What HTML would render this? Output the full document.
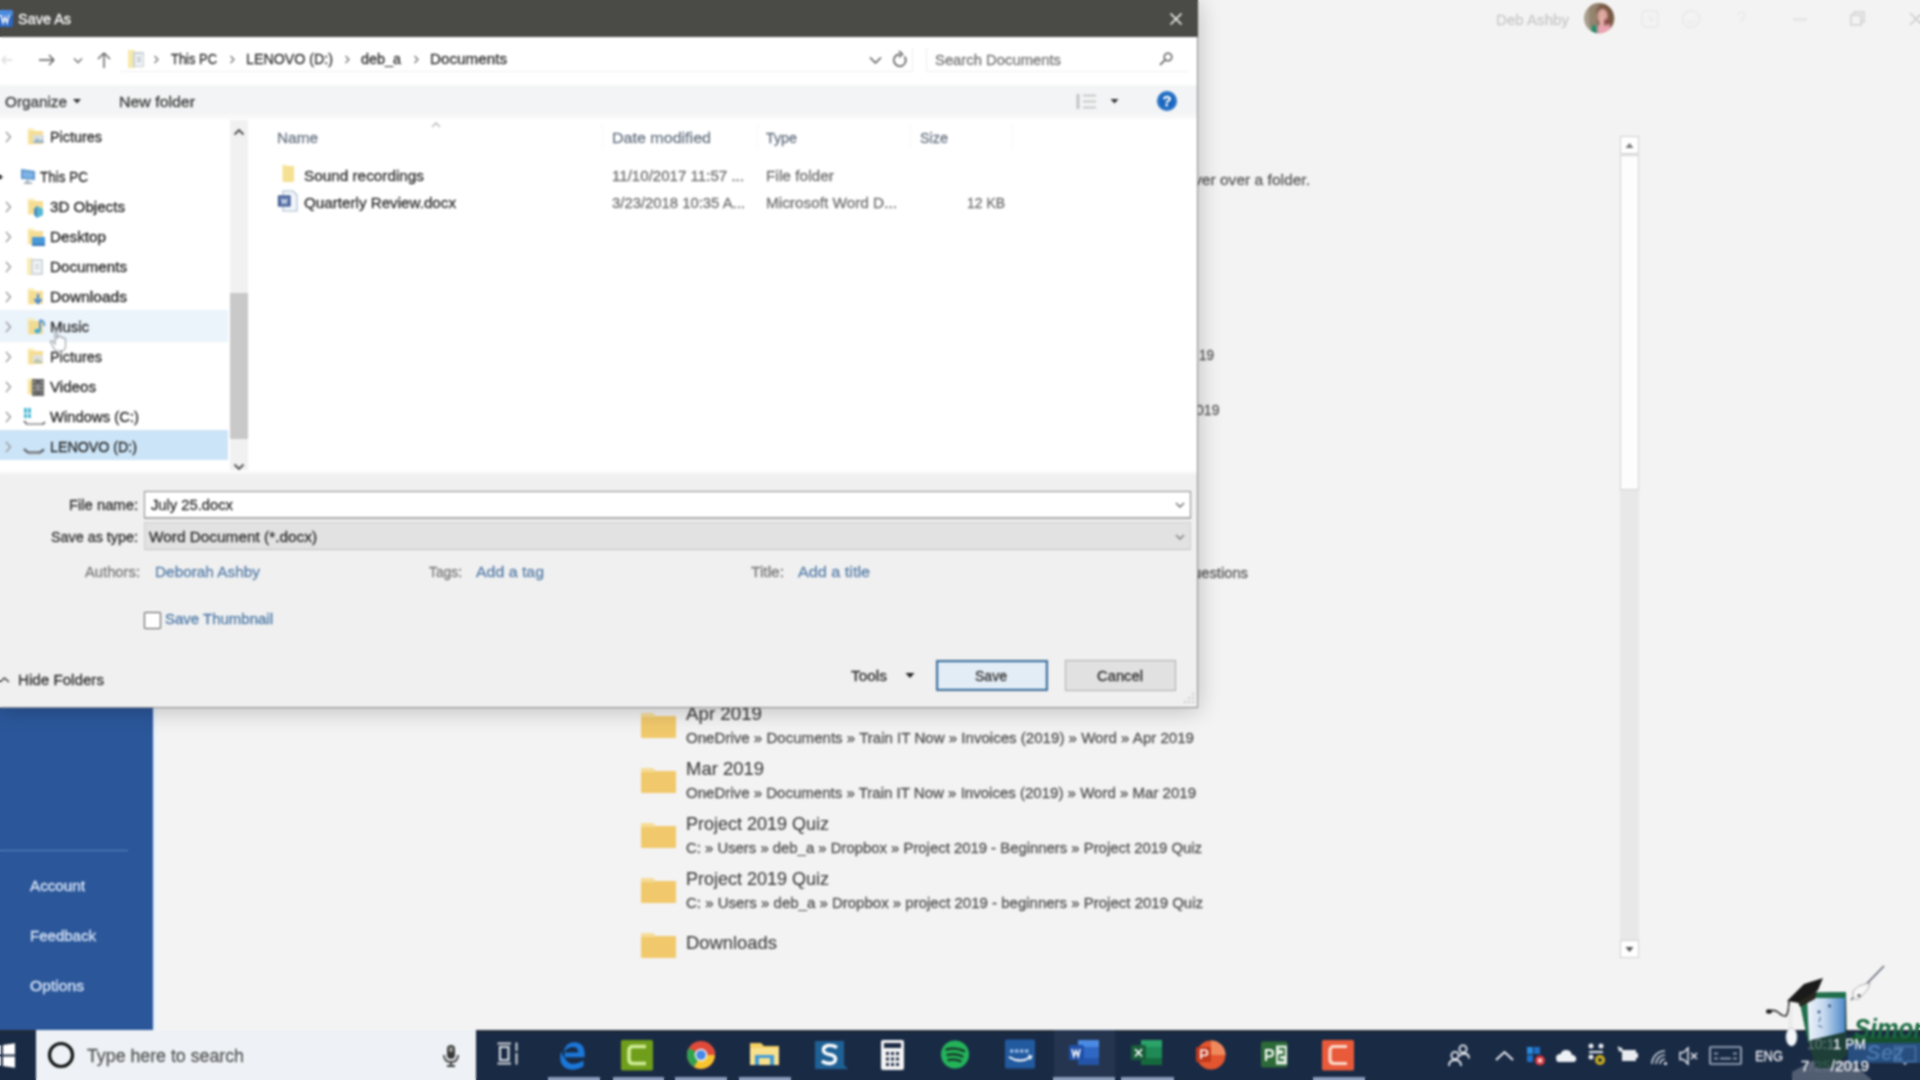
<!DOCTYPE html>
<html lang="en">
<head>
<meta charset="utf-8">
<title>Save As</title>
<style>
*{box-sizing:border-box;margin:0;padding:0}
html,body{width:1920px;height:1080px;overflow:hidden;background:#f3f3f3;font-family:"Liberation Sans",sans-serif;color:#222}
.abs{position:absolute}
svg{position:absolute;overflow:visible}
.t{position:absolute;white-space:nowrap;line-height:20px;height:20px;font-size:15px;color:#2e2e2e;transform-origin:0 50%;-webkit-text-stroke:.3px currentColor}
#stage{position:absolute;left:0;top:0;width:1920px;height:1080px;overflow:hidden;background:#f3f3f3}
/* Word backstage */
#wordside{left:0;top:700px;width:153px;height:330px;background:#2b579a}
#wordside .t{color:#dbe7f8}
.bgtxt{color:#5a5a5a}
.fold{position:absolute;width:35px;height:22px;background:#f1c96c;border-radius:1px}
.fold:before{content:"";position:absolute;left:0;top:-3px;width:14px;height:4px;background:#f5dc98;border-radius:1px 3px 0 0}
.ft{font-size:18px;color:#3f3f3f;-webkit-text-stroke:.15px currentColor}
.fp{font-size:15px;color:#505050}
/* dialog */
#dlg{left:0;top:0;width:1198px;height:708px;background:#fff;box-shadow:0 2px 22px 0 rgba(0,0,0,.24);border-right:1px solid #8c8c8c;border-bottom:1px solid #8c8c8c}
#titlebar{left:0;top:0;width:1198px;height:37px;background:#4a4a46}
#toolbar{left:0;top:85px;width:1197px;height:34px;background:linear-gradient(#f3f4f5,#f3f4f5 80%,#fbfbfb)}
#bottompane{left:0;top:474px;width:1197px;height:233px;background:#f0f0f0}
.nav{color:#1f1f1f}
.hdr{color:#687483}
.gray{color:#707070}
.lnk{color:#5b80aa}
.btn{position:absolute;border:1px solid #adadad;background:#e1e1e1}
/* taskbar */
#taskbar{left:0;top:1030px;width:1920px;height:50px;background:#192a44;border-top:2px solid #222a38}
#search{left:36px;top:1030px;width:440px;height:50px;background:#eef2f6}
.ind{position:absolute;top:1077px;height:3px;background:#8c9fbd}
</style>
</head>
<body>
<svg width="0" height="0" style="position:absolute"><defs><filter id="gb" x="0" y="0" width="100%" height="100%" color-interpolation-filters="sRGB"><feGaussianBlur stdDeviation="1" result="b"/><feMerge><feMergeNode in="SourceGraphic"/><feMergeNode in="b"/></feMerge></filter></defs></svg>
<div id="stage" style="filter:url(#gb)">

<!-- ===== Word background ===== -->
<div id="bgword" class="abs" style="left:0;top:0;width:1920px;height:1030px">
  <div class="t" style="left:1496px;top:10px;color:#c9c9c9;transform:scaleX(1.0062)">Deb Ashby</div>
  <!-- avatar -->
  <svg style="left:1583px;top:2px" width="32" height="33" viewBox="0 0 32 33">
    <defs><clipPath id="avc"><circle cx="16.200" cy="16.300" r="15.200"/></clipPath><filter id="avb"><feGaussianBlur stdDeviation="1.1"/></filter></defs>
    <g clip-path="url(#avc)"><g filter="url(#avb)">
      <rect x="-4" y="-4" width="40" height="41" fill="#8c7763"/>
      <rect x="-4" y="-4" width="12" height="41" fill="#aaa090"/>
      <rect x="6" y="2" width="9" height="22" fill="#94846f"/>
      <path d="M13 8q4-7 11-5 6 3 6 12l-1 12-5 2-9-3z" fill="#76543f"/>
      <ellipse cx="19.500" cy="14" rx="5" ry="7" fill="#dfa9a0"/>
      <ellipse cx="23" cy="20" rx="2.500" ry="3" fill="#8a4444"/>
      <path d="M17 17l3-1 1 8-4 1z" fill="#efb8b0"/>
      <rect x="8" y="23" width="6.500" height="12" fill="#1c8a6b"/>
      <path d="M14.500 23l6 1 6-2 4 12h-16z" fill="#eaa3b1"/>
    </g></g>
  </svg>
  <!-- faint header icons -->
  <svg style="left:1640px;top:8px" width="280" height="24" viewBox="0 0 280 24" fill="none" stroke="#e8e8e8" stroke-width="1.6">
    <rect x="2" y="3" width="16" height="16" rx="3"/><path d="M10 7v5h4"/>
    <circle cx="51" cy="11" r="8.5"/><path d="M47 13q4 4 8 0"/>
    <path d="M98 8q0-4 3.500-4t3.500 3.500q0 2-3.500 4v3" stroke="#e9e9e9"/>
    <path d="M153 11.500h14" stroke="#dcdcdc"/>
    <path d="M211 7h10v10h-10zM214 7v-3h10v10h-3" stroke="#d2d2d2"/>
    <path d="M270 5l12 12M282 5l-12 12" stroke="#cfcfcf"/>
  </svg>

  <div class="t bgtxt" style="left:1194px;top:170px;transform:scaleX(1.0382)">ver over a folder.</div>
  <div class="t bgtxt" style="left:1199px;top:345px;transform:scaleX(0.8989)">19</div>
  <div class="t bgtxt" style="left:1196px;top:400px;transform:scaleX(0.9388)">019</div>
  <div class="t bgtxt" style="left:1193px;top:563px;transform:scaleX(0.9843)">uestions</div>

  <div class="fold" style="left:641px;top:716px"></div>
  <div class="t ft" style="left:686px;top:704px;transform:scaleX(1.0402)">Apr 2019</div>
  <div class="t fp" style="left:686px;top:728px;transform:scaleX(1.0049)">OneDrive » Documents » Train IT Now » Invoices (2019) » Word » Apr 2019</div>
  <div class="fold" style="left:641px;top:771px"></div>
  <div class="t ft" style="left:686px;top:759px;transform:scaleX(1.0257)">Mar 2019</div>
  <div class="t fp" style="left:686px;top:783px;transform:scaleX(1.0023)">OneDrive » Documents » Train IT Now » Invoices (2019) » Word » Mar 2019</div>
  <div class="fold" style="left:641px;top:826px"></div>
  <div class="t ft" style="left:686px;top:814px;transform:scaleX(0.9995)">Project 2019 Quiz</div>
  <div class="t fp" style="left:686px;top:838px;transform:scaleX(0.9917)">C: » Users » deb_a » Dropbox » Project 2019 - Beginners » Project 2019 Quiz</div>
  <div class="fold" style="left:641px;top:881px"></div>
  <div class="t ft" style="left:686px;top:869px;transform:scaleX(0.9995)">Project 2019 Quiz</div>
  <div class="t fp" style="left:686px;top:893px;transform:scaleX(1.0001)">C: » Users » deb_a » Dropbox » project 2019 - beginners » Project 2019 Quiz</div>
  <div class="fold" style="left:641px;top:936px"></div>
  <div class="t ft" style="left:686px;top:933px;transform:scaleX(1.0218)">Downloads</div>

  <!-- right scrollbar -->
  <div class="abs" style="left:1620px;top:136px;width:19px;height:822px;background:#e8e8e8"></div>
  <div class="abs" style="left:1620px;top:155px;width:19px;height:335px;background:#fdfdfd;border:1px solid #d2d2d2"></div>
  <div class="abs" style="left:1620px;top:136px;width:19px;height:18px;background:#fff;border:1px solid #cfcfcf"></div>
  <div class="abs" style="left:1620px;top:940px;width:19px;height:18px;background:#fff;border:1px solid #cfcfcf"></div>
  <svg style="left:1620px;top:136px" width="19" height="822"><path d="M5.500 12l4-5 4 5z" fill="#777"/><path d="M5.500 811l4 5 4-5z" fill="#555"/></svg>

  <div id="wordside" class="abs">
    <div class="abs" style="left:0;top:150px;width:128px;height:1px;background:#5c80ba"></div>
    <div class="t" style="left:30px;top:176px;transform:scaleX(1.0147)">Account</div>
    <div class="t" style="left:30px;top:226px;transform:scaleX(1.0019)">Feedback</div>
    <div class="t" style="left:30px;top:276px;transform:scaleX(1.0444)">Options</div>
  </div>
  <div class="abs" style="left:153px;top:700px;width:5px;height:330px;background:linear-gradient(90deg,#e4eefa,#f1f4f8)"></div>
</div>
<!-- ===== Save As dialog ===== -->
<div id="dlg" class="abs">
  <div id="titlebar" class="abs">
    <svg style="left:0;top:10px" width="14" height="18" viewBox="0 0 14 18"><rect x="-6" y="0" width="19" height="17" rx="2" fill="#2b66c4"/><rect x="-6" y="0" width="19" height="6" rx="2" fill="#4a8be0"/><path d="M1 5l2 8 2-6 2 6 2-8" stroke="#fff" stroke-width="1.500" fill="none"/></svg>
    <div class="t" style="left:18px;top:9px;color:#fff;transform:scaleX(0.9628)">Save As</div>
    <svg style="left:1169px;top:12px" width="14" height="14" viewBox="0 0 14 14"><path d="M1.500 1.500l11 11M12.500 1.500l-11 11" stroke="#f2f2f2" stroke-width="1.700"/></svg>
  </div>

  <!-- address row -->
  <svg style="left:0;top:44px" width="1197" height="34" viewBox="0 0 1197 34" fill="none">
    <path d="M2 16h10M2 16l4-4M2 16l4 4" stroke="#d9d9d9" stroke-width="1.300"/>
    <path d="M39 16h15M54 16l-5-5M54 16l-5 5" stroke="#5a5a5a" stroke-width="1.400"/>
    <path d="M74 14.500l4 4 4-4" stroke="#6a6a6a" stroke-width="1.300"/>
    <path d="M104 24v-15M104 9l-6 6M104 9l6 6" stroke="#5a5a5a" stroke-width="1.400"/>
    <!-- folder/doc icon -->
    <rect x="128" y="6" width="7" height="18" fill="#f6e9a8"/>
    <rect x="133" y="8" width="11" height="15" fill="#c9d0d6"/>
    <rect x="135" y="10" width="8" height="12" fill="#eef1f3"/>
    <path d="M137 14h4M137 17h4" stroke="#8fa1b3" stroke-width="1"/>
    <!-- separators -->
    <path d="M154.500 12l3.500 3.500-3.500 3.500M230.500 12l3.500 3.500-3.500 3.500M345.500 12l3.500 3.500-3.500 3.500M414.500 12l3.500 3.500-3.500 3.500" stroke="#707070" stroke-width="1.200"/>
    <!-- dropdown + refresh -->
    <path d="M870 13.500l5.500 5.500 5.500-5.500" stroke="#555" stroke-width="1.500"/>
    <path d="M904.500 12.500a6 6 0 1 1-4.500-2.300" stroke="#555" stroke-width="1.600"/><path d="M899 7l3.500 3.200-3.500 3" stroke="#555" stroke-width="1.400"/>
    <!-- box borders (faint) -->
    <path d="M120 27.500h792.500v-24" stroke="#f0f0f0" stroke-width="1"/>
    <path d="M926.500 3.500v24h262" stroke="#efefef" stroke-width="1"/>
    <!-- search icon -->
    <circle cx="1168" cy="13" r="3.800" stroke="#5a5a5a" stroke-width="1.500"/><path d="M1165 16l-5 5" stroke="#5a5a5a" stroke-width="1.700"/>
  </svg>
  <div class="t" style="left:171px;top:49px;transform:scaleX(0.8623)">This PC</div>
  <div class="t" style="left:246px;top:49px;transform:scaleX(0.9489)">LENOVO (D:)</div>
  <div class="t" style="left:361px;top:49px;transform:scaleX(0.9588)">deb_a</div>
  <div class="t" style="left:430px;top:49px;transform:scaleX(1.0148)">Documents</div>
  <div class="t" style="left:935px;top:50px;color:#767676;transform:scaleX(0.9878)">Search Documents</div>

  <!-- toolbar -->
  <div id="toolbar" class="abs"></div>
  <div class="t" style="left:5px;top:92px;color:#3a3a3a;transform:scaleX(1.0185)">Organize</div>
  <div class="t" style="left:119px;top:92px;color:#3a3a3a;transform:scaleX(1.0599)">New folder</div>
  <svg style="left:0;top:85px" width="1197" height="34" viewBox="0 0 1197 34">
    <path d="M73 14h8l-4 4.500z" fill="#333"/>
    <path d="M1078 9v15" stroke="#c4c4c4" stroke-width="3"/>
    <path d="M1083 10.500h13M1083 16.500h13M1083 22.500h13" stroke="#c8c8c8" stroke-width="1.800"/>
    <path d="M1110.500 14h8l-4 4.500z" fill="#333"/>
    <circle cx="1167" cy="16" r="10" fill="#1a66bd"/>
    <circle cx="1167" cy="16" r="8.300" fill="none" stroke="#3f8ade" stroke-width="1"/>
  </svg>
  <div class="t" style="left:1162.500px;top:91px;color:#fff;font-size:15px;font-weight:bold">?</div>
  <!-- nav pane -->
  <div class="abs" style="left:0;top:310px;width:228px;height:32px;background:#ebf3fb"></div>
  <div class="abs" style="left:0;top:430px;width:228px;height:30px;background:#cce4f7"></div>
  <svg style="left:0;top:120px" width="250" height="354" viewBox="0 0 250 354" fill="none">
    <defs>
      <filter id="sb" x="-10%" y="-10%" width="120%" height="120%"><feGaussianBlur stdDeviation=".45"/></filter>
      <g id="cv"><path d="M0 0l4.500 5-4.500 5" stroke="#9a9a9a" stroke-width="1.400" fill="none"/></g>
      <g id="fd"><rect x="0.500" y="0.500" width="7" height="16" fill="#f8eaa6"/><rect x="2" y="3" width="14" height="13" fill="#f3d579"/></g>
    </defs>
    <use href="#cv" x="6" y="12"/><use href="#cv" x="6" y="82"/><use href="#cv" x="6" y="112"/><use href="#cv" x="6" y="142"/><use href="#cv" x="6" y="172"/>
    <use href="#cv" x="6" y="202"/><use href="#cv" x="6" y="232"/><use href="#cv" x="6" y="262"/><use href="#cv" x="6" y="292"/><use href="#cv" x="6" y="322"/>
    <path d="M0 54l3 3-3 3z" fill="#444"/>
    <g opacity=".8" filter="url(#sb)">
    <!-- Pictures (top) -->
    <use href="#fd" x="27" y="8"/><rect x="33" y="15" width="11" height="8" fill="#cfd8dc"/><path d="M33 23l4-5 3 3 2-2 2 4z" fill="#7aa0b8"/>
    <!-- This PC -->
    <path d="M21 49l14 2v9l-14-1z" fill="#3b7fc4"/><path d="M23 51.500l10 1.500v5l-10-.500z" fill="#5fa3e0"/><path d="M24 63h8M27.500 60v3" stroke="#6b7f92" stroke-width="1.500"/>
    <!-- 3D Objects -->
    <use href="#fd" x="27" y="78"/><path d="M37 86l6 3v6l-6 3z" fill="#2aa6c8"/><path d="M37 86l-3 3v6l3 3z" fill="#1d6fb0"/>
    <!-- Desktop -->
    <use href="#fd" x="27" y="108"/><rect x="32" y="117" width="13" height="9" fill="#1f7fd0"/><rect x="32" y="124" width="13" height="2" fill="#0d5aa6"/>
    <!-- Documents -->
    <rect x="27" y="138" width="6" height="17" fill="#f8eaa6"/><rect x="31" y="139" width="12" height="16" fill="#c6ccd2"/><rect x="33" y="141" width="8" height="12" fill="#f1f3f5"/><path d="M35 145h4M35 148h4" stroke="#93a3b3"/>
    <!-- Downloads -->
    <use href="#fd" x="27" y="168"/><path d="M38 174v7M34.500 179l3.500 4 3.500-4" stroke="#1e6fd0" stroke-width="2.200"/>
    <!-- Music -->
    <use href="#fd" x="27" y="198"/><path d="M40 200v11" stroke="#1b73c8" stroke-width="1.800"/><ellipse cx="37.500" cy="211" rx="3" ry="2.300" fill="#1b9ed0"/><path d="M40 200q5 1 4 6" stroke="#1b73c8" stroke-width="1.600"/>
    <!-- Pictures -->
    <use href="#fd" x="27" y="228"/><rect x="33" y="235" width="10" height="8" fill="#d9dcd6"/><path d="M33 243l4-5 3 3 1-1 2 3z" fill="#a6b3a0"/>
    <!-- Videos -->
    <use href="#fd" x="27" y="258"/><rect x="32" y="259" width="12" height="17" fill="#3a3a3a"/><path d="M34 261v13M42 261v13" stroke="#c9c9c9" stroke-width="1.200" stroke-dasharray="2 2"/><rect x="36" y="264" width="4" height="7" fill="#777"/>
    <!-- Windows (C:) -->
    <path d="M24 288h3v5h-3zM28 288h3v5h-3zM24 294h3v4h-3zM28 294h3v4h-3z" fill="#22a9c9"/><path d="M24 301l3 3h16l2-2" stroke="#5c5c5c" stroke-width="2"/><path d="M27 303.500h15" stroke="#bdbdbd" stroke-width="1.500"/>
    <!-- LENOVO (D:) -->
    <path d="M24 329l4 3.500h12l4-3" stroke="#3d3d3d" stroke-width="2.200"/><path d="M28 334h13" stroke="#b5b5b5" stroke-width="1.300"/>
    </g>
    <!-- nav scrollbar -->
    <rect x="230" y="0" width="18" height="354" fill="#f1f1f1"/>
    <rect x="230" y="173" width="18" height="146" fill="#c9c9c9"/>
    <path d="M234.500 14.500l4.500-4.500 4.500 4.500" stroke="#4d4d4d" stroke-width="1.800"/>
    <path d="M234.500 344.500l4.500 4.500 4.500-4.500" stroke="#4d4d4d" stroke-width="1.800"/>
  </svg>
  <div class="t nav" style="left:50px;top:127px;transform:scaleX(0.9596)">Pictures</div>
  <div class="t nav" style="left:40px;top:167px;transform:scaleX(0.8998)">This PC</div>
  <div class="t nav" style="left:50px;top:197px;transform:scaleX(1.0107)">3D Objects</div>
  <div class="t nav" style="left:50px;top:227px;transform:scaleX(1.0176)">Desktop</div>
  <div class="t nav" style="left:50px;top:257px;transform:scaleX(1.0148)">Documents</div>
  <div class="t nav" style="left:50px;top:287px;transform:scaleX(1.0375)">Downloads</div>
  <div class="t nav" style="left:50px;top:317px;transform:scaleX(0.9956)">Music</div>
  <div class="t nav" style="left:50px;top:347px;transform:scaleX(0.9596)">Pictures</div>
  <div class="t nav" style="left:50px;top:377px;transform:scaleX(1.0089)">Videos</div>
  <div class="t nav" style="left:50px;top:407px;transform:scaleX(0.9887)">Windows (C:)</div>
  <div class="t nav" style="left:50px;top:437px;transform:scaleX(0.9489)">LENOVO (D:)</div>
  <!-- hand cursor -->
  <svg style="left:50px;top:328px" width="20" height="26" viewBox="0 0 20 26"><path d="M5 1.500q2-.5 2 1.500v8l1-3q2-.5 2.500 1 2-.5 2.500 1 2.500-.5 2.500 2v6q0 4-3 5h-6q-2-1-4-5l-2-4q0-2 2.500-.5l2 2.500z" fill="#fff" stroke="#8a8f96" stroke-width="1.200" opacity=".8"/></svg>

  <!-- file list -->
  <svg style="left:250px;top:120px" width="947" height="100" viewBox="0 0 947 100" fill="none">
    <path d="M182 7l4-4 4 4" stroke="#b5b5b5" stroke-width="1.300"/>
    <path d="M352.500 4v26M507.500 4v26M660.500 4v26M762.500 4v26" stroke="#f9f9f9"/>
    <!-- folder icon -->
    <rect x="32" y="44.500" width="5" height="17.500" fill="#faf1c4"/><rect x="33" y="46" width="11" height="16" fill="#f5e093"/>
    <!-- docx icon -->
    <path d="M33 71h10l4 4v16h-14z" fill="#f1f6fc" stroke="#a9b9cc" stroke-width="1.100"/>
    <rect x="28.500" y="76" width="11.500" height="10" fill="#5571a6" stroke="#3a558c" stroke-width="1.200"/>
    <path d="M31.500 78.500l1.300 5 1.500-4 1.500 4 1.300-5" stroke="#e8eef8" stroke-width="1.100"/>
  </svg>
  <div class="t hdr" style="left:277px;top:128px;transform:scaleX(1.0246)">Name</div>
  <div class="t hdr" style="left:612px;top:128px;transform:scaleX(1.0695)">Date modified</div>
  <div class="t hdr" style="left:766px;top:128px;transform:scaleX(0.9529)">Type</div>
  <div class="t hdr" style="left:920px;top:128px;transform:scaleX(0.9593)">Size</div>
  <div class="t" style="left:304px;top:166px;transform:scaleX(1.0206)">Sound recordings</div>
  <div class="t gray" style="left:612px;top:166px;transform:scaleX(1.0058)">11/10/2017 11:57 ...</div>
  <div class="t gray" style="left:766px;top:166px;transform:scaleX(1.0325)">File folder</div>
  <div class="t" style="left:304px;top:193px;transform:scaleX(1.0129)">Quarterly Review.docx</div>
  <div class="t gray" style="left:612px;top:193px;transform:scaleX(0.9903)">3/23/2018 10:35 A...</div>
  <div class="t gray" style="left:766px;top:193px;transform:scaleX(1.0227)">Microsoft Word D...</div>
  <div class="t gray" style="left:967px;top:193px;transform:scaleX(0.9297)">12 KB</div>

  <!-- bottom pane -->
  <div id="bottompane" class="abs"></div>
  <div class="abs" style="left:0;top:470px;width:1197px;height:6px;background:linear-gradient(#fff,#f0f0f0)"></div>
  <div class="t" style="left:69px;top:495px;transform:scaleX(0.9853)">File name:</div>
  <div class="abs" style="left:144px;top:491px;width:1047px;height:28px;background:#fff;border:1px solid #8a8a8a;border-bottom:2px solid #a9a9a9"></div>
  <div class="t" style="left:151px;top:495px;transform:scaleX(0.9833)">July 25.docx</div>
  <div class="t" style="left:51px;top:527px;transform:scaleX(0.9572)">Save as type:</div>
  <div class="abs" style="left:144px;top:522px;width:1047px;height:28px;background:#e2e2e2;border:1px solid #cdcdcd;border-bottom-color:#c2c2c2"></div>
  <div class="t" style="left:149px;top:527px;transform:scaleX(1.0247)">Word Document (*.docx)</div>
  <svg style="left:1172px;top:495px" width="16" height="50" viewBox="0 0 16 50" fill="none"><path d="M4 8l4 4 4-4" stroke="#666" stroke-width="1.300"/><path d="M4 40l4 4 4-4" stroke="#777" stroke-width="1.300"/></svg>
  <div class="t gray" style="left:85px;top:562px;color:#7a7a7a;transform:scaleX(0.9843)">Authors:</div>
  <div class="t lnk" style="left:155px;top:562px;transform:scaleX(1.0236)">Deborah Ashby</div>
  <div class="t gray" style="left:429px;top:562px;color:#7a7a7a;transform:scaleX(0.9203)">Tags:</div>
  <div class="t lnk" style="left:476px;top:562px;transform:scaleX(1.0589)">Add a tag</div>
  <div class="t gray" style="left:751px;top:562px;color:#7a7a7a;transform:scaleX(1.0328)">Title:</div>
  <div class="t lnk" style="left:798px;top:562px;transform:scaleX(1.0792)">Add a title</div>
  <div class="abs" style="left:144px;top:612px;width:17px;height:17px;background:#fff;border:1.500px solid #555;border-radius:1px"></div>
  <div class="t lnk" style="left:165px;top:609px;color:#4f7aa8;transform:scaleX(0.9988)">Save Thumbnail</div>
  <svg style="left:0;top:674px" width="12" height="12" viewBox="0 0 12 12" fill="none"><path d="M0 8l4.500-4 4.500 4" stroke="#444" stroke-width="1.600"/></svg>
  <div class="t" style="left:18px;top:670px;transform:scaleX(1.0112)">Hide Folders</div>
  <div class="t" style="left:851px;top:666px;transform:scaleX(1.0277)">Tools</div>
  <svg style="left:904px;top:671px" width="12" height="10" viewBox="0 0 12 10"><path d="M1.500 2h9l-4.500 5z" fill="#222"/></svg>
  <div class="btn" style="left:936px;top:660px;width:112px;height:31px;border:2px solid #3f6e99;background:#e3edf6;box-shadow:inset 0 0 0 1px #bcd9f1"></div>
  <div class="t" style="left:975px;top:666px;transform:scaleX(0.9356)">Save</div>
  <div class="btn" style="left:1065px;top:660px;width:111px;height:31px"></div>
  <div class="t" style="left:1097px;top:666px;transform:scaleX(0.9849)">Cancel</div>
  <svg style="left:1184px;top:693px" width="12" height="12" viewBox="0 0 12 12" fill="#c8c8c8"><rect x="8" y="0" width="2" height="2"/><rect x="4" y="4" width="2" height="2"/><rect x="8" y="4" width="2" height="2"/><rect x="0" y="8" width="2" height="2"/><rect x="4" y="8" width="2" height="2"/><rect x="8" y="8" width="2" height="2"/></svg>

</div>

<!-- ===== Taskbar ===== -->
<div id="taskbar" class="abs"></div>
<div class="abs" style="left:1054px;top:1030px;width:61px;height:50px;background:#25354f"></div>
<div id="search" class="abs">
  <svg style="left:11px;top:11px" width="30" height="30" viewBox="0 0 30 30"><circle cx="14" cy="14" r="11.500" fill="none" stroke="#111" stroke-width="3.200"/></svg>
  <div class="t" style="left:51px;top:16px;font-size:18px;color:#555;transform:scaleX(0.9868)">Type here to search</div>
  <svg style="left:406px;top:14px" width="18" height="24" viewBox="0 0 18 24" fill="none"><rect x="5" y="1" width="8" height="14" rx="4" fill="#3a3a3a"/><rect x="7" y="3" width="4" height="5" rx="1.500" fill="#9a9a9a"/><path d="M2 11q0 7 7 7t7-7" stroke="#3a3a3a" stroke-width="1.800"/><path d="M9 18v3M5 22h8" stroke="#3a3a3a" stroke-width="1.800"/></svg>
</div>
<div class="ind" style="left:548px;width:52px"></div>
<div class="ind" style="left:613px;width:51px"></div>
<div class="ind" style="left:675px;width:52px"></div>
<div class="ind" style="left:739px;width:52px"></div>
<div class="ind" style="left:1053px;width:62px"></div>
<div class="ind" style="left:1121px;width:53px"></div>
<div class="ind" style="left:1313px;width:52px"></div>
<svg style="left:0;top:1030px" width="1920" height="50" viewBox="0 0 1920 50" fill="none">
  <!-- start -->
  <path d="M-8 16.500l9-1.300v9.300h-9zM3 15l12-1.700v11.200h-12zM-8 26.500h9v9.300l-9-1.300zM3 26.500h12v11.200l-12-1.700z" fill="#fff"/>
  <!-- task view -->
  <path d="M497.500 13.500h13.500M497.500 33.500h13.500M500 17h8.500v13h-8.500z" stroke="#d5d9e0" stroke-width="2.200"/><path d="M516.500 12.500v22" stroke="#d5d9e0" stroke-width="2"/><path d="M515 22h3" stroke="#192a44" stroke-width="2"/>
  <!-- edge -->
  <g transform="translate(574 26) scale(1.06 1.14) translate(-574 -26)"><path d="M564 27h20q1-13-10-13-8 0-10 9 4-5 9-5 5 0 5 5h-13q-1 9 8 10 5 0 10-3v5q-5 3-11 3-11-1-11-11 0-3 1-5" fill="#1b77d8"/></g>
  <!-- camtasia green -->
  <rect x="621" y="10" width="32" height="30.500" rx="1.500" fill="#6f9e1b"/><path d="M646 16.500h-13q-4 0-4 4v9q0 4 4 4h13" stroke="#cfec96" stroke-width="3.600"/>
  <!-- chrome -->
  <circle cx="701" cy="25" r="14" fill="#e04a3a"/><path d="M701 25l-12.100-7a14 14 0 0 0 5.100 19.100z" fill="#2fa24f"/><path d="M701 25l-7 12.100a14 14 0 0 0 19.100-19.100z" fill="#f6c52e"/><path d="M701 25h14a14 14 0 0 0-1.900-7h-12.100z" fill="#e04a3a"/><circle cx="701" cy="25" r="6.300" fill="#f4f4f4"/><circle cx="701" cy="25" r="4.800" fill="#4688e8"/>
  <!-- explorer -->
  <path d="M750 13h11l3 3h15v19h-29z" fill="#f3cf63"/><rect x="750" y="18" width="29" height="17" fill="#f9e08c"/><rect x="755" y="25" width="19" height="10" fill="#3e9ad8"/><rect x="759" y="28" width="11" height="7" fill="#f9e08c"/>
  <!-- snagit -->
  <path d="M815 11h29v24l4 4h-33z" fill="#1f6195"/><path d="M837 17.500q-4-2.500-9-2-5 1-4.500 5 .5 3 6 4 6 1 6 4.500 0 4-5.500 4.500-5 0-8-2.500" stroke="#fff" stroke-width="3.400"/>
  <!-- calculator -->
  <rect x="881" y="10" width="23" height="30" rx="2" fill="#f4f4f4"/><rect x="884" y="13" width="17" height="5" fill="#1d2b45"/><path d="M886 23.500h3M891 23.500h3M896 23.500h3M886 29h3M891 29h3M896 29h3M886 34.500h3M891 34.500h3M896 34.500h3" stroke="#1d2b45" stroke-width="3"/>
  <!-- spotify -->
  <circle cx="955" cy="24.500" r="14" fill="#23b45a"/><path d="M946.500 19.500q9-2.500 17.500 1.500M947.500 25q8-2 15 1.500M948.500 30q6.500-1.500 12 1.200" stroke="#173a2a" stroke-width="2.500" stroke-linecap="round"/>
  <!-- amazon -->
  <rect x="1005" y="9.500" width="30" height="29" rx="1.500" fill="#225a9f"/><path d="M1009 27q11 7 22 0" stroke="#fff" stroke-width="2"/><path d="M1028 25.500l3.500.8-1.500 3.200" stroke="#fff" stroke-width="1.500"/><path d="M1010 21h20" stroke="#9fc0e6" stroke-width="3" stroke-dasharray="3.500 1.500"/>
  <!-- word -->
  <rect x="1078" y="10" width="21" height="25" rx="1.500" fill="#2f68c4"/><rect x="1078" y="10" width="21" height="7" fill="#4a8ae2"/><rect x="1078" y="28" width="21" height="7" fill="#2454a8"/><rect x="1069" y="15" width="15" height="15" rx="1.500" fill="#1f50a8"/><path d="M1072 19l1.800 7.500 2.200-6 2.200 6 1.800-7.500" stroke="#fff" stroke-width="1.600"/>
  <!-- excel -->
  <rect x="1141" y="10" width="21" height="25" rx="1.500" fill="#1f8a55"/><rect x="1141" y="10" width="21" height="7" fill="#2aa268"/><rect x="1141" y="28" width="21" height="7" fill="#156a3d"/><rect x="1131" y="15" width="15" height="15" rx="1.500" fill="#175c38"/><path d="M1135 19l7 7.500M1142 19l-7 7.500" stroke="#fff" stroke-width="1.800"/>
  <!-- powerpoint -->
  <circle cx="1211" cy="25" r="14.500" fill="#e2552f"/><path d="M1211 10.500a14.500 14.500 0 0 1 14.500 14.500h-14.500z" fill="#f08a5c"/><rect x="1196" y="17" width="15" height="15" rx="1.500" fill="#c2391c"/><path d="M1201 29v-9h3.500q3 0 3 2.700t-3 2.800h-3.500" stroke="#fff" stroke-width="1.700"/>
  <!-- project -->
  <rect x="1261" y="11.500" width="26.500" height="26" rx="2" fill="#2c6a38"/><rect x="1276" y="15.500" width="11" height="19" fill="#e3eee3"/><path d="M1266 31v-11h3.500q3.500 0 3.500 3.200t-3.500 3.300h-3.500" stroke="#fff" stroke-width="2"/><path d="M1279 19h5v6h-5M1279 25v5h5" stroke="#2c6a38" stroke-width="1.800"/>
  <!-- camtasia orange -->
  <rect x="1322" y="10" width="32" height="30.500" rx="1.500" fill="#e85a3a"/><path d="M1347 16.500h-13q-4 0-4 4v9q0 4 4 4h13" stroke="#fbd9cc" stroke-width="3.200"/>
  <!-- people -->
  <circle cx="1463" cy="19" r="3.600" stroke="#e8ebf0" stroke-width="1.800"/><circle cx="1455" cy="25.500" r="3.600" stroke="#e8ebf0" stroke-width="1.800"/><path d="M1449 36q0-6 6-6t6 6M1459.500 26q2-2.500 5-2.500 4.500.5 4.500 5" stroke="#e8ebf0" stroke-width="1.800"/>
  <!-- chevron -->
  <path d="M1496 30l8.500-8 8.500 8" stroke="#e8ebf0" stroke-width="2"/>
  <!-- blue icon + red x -->
  <rect x="1527" y="17" width="6" height="7" fill="#2a8be0"/><rect x="1534" y="17" width="6" height="7" fill="#1f6fc6"/><rect x="1527" y="25" width="6" height="7" fill="#1f6fc6"/><circle cx="1540" cy="30.500" r="5" fill="#d8343c"/><path d="M1538 28.500l4 4M1542 28.500l-4 4" stroke="#fff" stroke-width="1.300"/>
  <!-- onedrive -->
  <path d="M1558 32h16q3-1 2-4.500-1-3-4-2.500-1-5-6-5-4 0-5.500 4-4.500 0-4.500 4 0 3 2 4z" fill="#eef1f5"/>
  <!-- dots + yellow -->
  <circle cx="1591" cy="16" r="2.500" fill="#e8ebf0"/><circle cx="1601" cy="16" r="2.500" fill="#e8ebf0"/><path d="M1589 22h14" stroke="#e8ebf0" stroke-width="2"/><circle cx="1591" cy="27" r="2.500" fill="#e8ebf0"/><circle cx="1600" cy="30" r="5" fill="#d2b21c"/><circle cx="1600" cy="30" r="2" fill="#1c2b46"/>
  <!-- battery plug -->
  <rect x="1622" y="20" width="14" height="11" fill="#e8ebf0"/><rect x="1636" y="23" width="2" height="5" fill="#e8ebf0"/><path d="M1618 17l5 5M1619 21l3-3" stroke="#e8ebf0" stroke-width="2"/>
  <!-- wifi -->
  <path d="M1652 34a13 13 0 0 1 13-13M1656 34a9 9 0 0 1 9-9M1660 34a5 5 0 0 1 5-5" stroke="#c9d0da" stroke-width="1.700"/><circle cx="1665.500" cy="33.500" r="1.600" fill="#e8ebf0"/>
  <!-- volume mute -->
  <path d="M1680 22.500h3.500l4.500-4.500v16l-4.500-4.500h-3.500z" stroke="#e8ebf0" stroke-width="1.500"/><path d="M1691 23l6 6M1697 23l-6 6" stroke="#e8ebf0" stroke-width="1.600"/>
  <!-- keyboard -->
  <rect x="1710" y="17" width="31" height="17" rx="1" stroke="#a9b5c6" stroke-width="1.700"/><path d="M1714 23.500h4M1733 23.500h4M1714 28.500h4M1720 28.500h11M1733 28.500h4" stroke="#a9b5c6" stroke-width="1.700"/>
  <!-- notification -->
  <path d="M1894.500 16.500h21v15h-8l-2.500 2.500-2.500-2.500h-8z" stroke="#a9c7ea" stroke-width="1.600"/><path d="M1900.500 17v14" stroke="#a9c7ea" stroke-width="1.200"/>
</svg>
<div class="t" style="left:1755px;top:1046px;color:#e8ebf0;font-size:14px;transform:scaleX(0.9228)">ENG</div>
<!-- watermark logo -->
<svg style="left:1750px;top:950px" width="170" height="130" viewBox="0 0 170 130" fill="none">
  <defs><linearGradient id="scr" x1="0" y1="0" x2="1" y2="0"><stop offset="0" stop-color="#eef3fa"/><stop offset=".45" stop-color="#c4d8ee"/><stop offset="1" stop-color="#4d88c8"/></linearGradient></defs>
  <!-- base / shadow -->
  <path d="M42 122l20-11h38l22 19h-80z" fill="#5c6679" opacity=".85"/>
  <!-- blue band with Sez -->
  <rect x="98" y="92" width="72" height="21" fill="#2b598f" opacity=".78"/>
  <text x="116" y="110" font-family="Liberation Sans, sans-serif" font-size="22" font-weight="bold" font-style="italic" fill="#4f7fb8" opacity=".8">Sez</text>
  <!-- green text -->
  <rect x="100" y="86" width="70" height="7" fill="#16532f" opacity=".9"/>
  <text x="104" y="88" font-family="Liberation Sans, sans-serif" font-size="27" font-weight="bold" font-style="italic" fill="#1b6b41" textLength="74" lengthAdjust="spacingAndGlyphs">Simon</text>
  <!-- monitor body -->
  <path d="M48 43l48-1 1 63-15 13h-16l-8-26z" fill="#1d3f38"/>
  <path d="M48 43l48-1v8h-39l2 41-1 1z" fill="#1f6f4b"/>
  <path d="M57 48h38v34l-36 8.500z" fill="url(#scr)"/>
  <circle cx="69" cy="62" r="1.400" fill="#2a4a7a"/><circle cx="79.500" cy="56" r="1.400" fill="#2a4a7a"/>
  <path d="M70.500 67l-1.500 5M68 75.500l4.500 1.800" stroke="#3a5a8a" stroke-width="1"/>
  <!-- hat -->
  <path d="M37 51l17-17 19-6-5 12-19 13z" fill="#1a1a1a"/>
  <path d="M48 52l19-11-2 8-15 8z" fill="#2a2620"/>
  <path d="M39 50q0 12-3 16-4 0-7-3-4-4-9-2" stroke="#2a2a2a" stroke-width="1.600"/>
  <ellipse cx="19" cy="61.500" rx="3" ry="2.200" fill="#1c1c1c"/>
  <!-- arm and glove -->
  <path d="M40.500 56v24" stroke="#cfcfcf" stroke-width="3"/><path d="M40.500 56v24" stroke="#fff" stroke-width="1.600"/>
  <ellipse cx="41.500" cy="87" rx="5.500" ry="9" fill="#f4f6fa" stroke="#b8bcc6" stroke-width=".8"/>
  <!-- pointer -->
  <path d="M101 50l33-34" stroke="#5d6270" stroke-width="1.500"/>
  <path d="M103 41q5-6 12-7l5-1-2 6-8 9q-5 3-7-1z" fill="#f7f7f7" stroke="#9a9a9a" stroke-width=".8"/>
  <circle cx="109" cy="45.500" r="1.600" fill="#555"/>
</svg>
<div class="t" style="left:1807px;top:1034px;color:#e8ebf0;font-size:14px;transform:scaleX(1.0016)"><span style="opacity:.3">10:1</span>1 PM</div>
<div class="t" style="left:1801px;top:1056px;color:#e8ebf0;font-size:14px;transform:scaleX(1.0913)">7<span style="opacity:.12">/25</span>/2019</div>


</div>
</body>
</html>
